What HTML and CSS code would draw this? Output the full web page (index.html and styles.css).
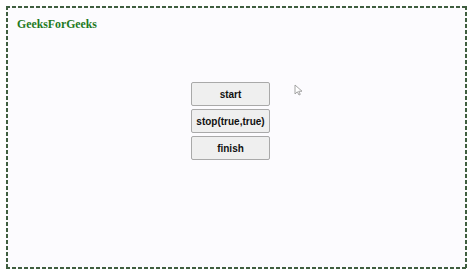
FILE: index.html
```html
<!DOCTYPE html>
<html lang="en">
<head>
  <meta charset="UTF-8" />
  <title>GeeksForGeeks</title>
  <link rel="stylesheet" href="styles.css">
</head>
<body>
  <div class="box">
    <h1 class="title">GeeksForGeeks</h1>

    <div class="controls">
      <button class="button">start</button>
      <button class="button">stop(true,true)</button>
      <button class="button">finish</button>
    </div>

    <!-- mouse pointer left in the capture -->
    <svg class="cursor" width="9" height="12" viewBox="0 0 9 12">
      <path d="M1 1 L1 10 L3.3 7.8 L5 11 L6.3 10.4 L4.7 7.3 L8 7.2 Z" fill="#fff" stroke="#9a9a9a" stroke-width="0.9" stroke-linejoin="round" />
    </svg>
  </div>
</body>
</html>
```

FILE: styles.css
```css
body {
  margin: 0;
  background-color: white;
  font-family: "Liberation Serif", serif;
}

/* dashed frame drawn with gradients to get the short dashes */
.box {
  position: relative;
  box-sizing: border-box;
  height: 263px;
  margin: 6px 7px 0 6px;
  padding: 11px 10px 10px 11px;
  background:
    repeating-linear-gradient(90deg, #3f5e3f 0 4px, transparent 4px 6px) left top / 100% 2px no-repeat,
    repeating-linear-gradient(90deg, #3f5e3f 0 4px, transparent 4px 6px) left bottom / 100% 2px no-repeat,
    repeating-linear-gradient(180deg, #3f5e3f 0 4px, transparent 4px 6px) left top / 2px 100% no-repeat,
    repeating-linear-gradient(180deg, #3f5e3f 0 4px, transparent 4px 6px) right top / 2px 100% no-repeat,
    #fcfbfe;
}

.title {
  margin: 0;
  font-size: 11.8px;
  line-height: 14px;
  font-weight: bold;
  color: #1f7a1f;
}

.controls {
  display: flex;
  flex-direction: column;
  align-items: flex-start;
  gap: 3px;
  margin-top: 51px;
  margin-left: 174px;
}

/* Button Styling */
.button {
  width: 79px;
  height: 24px;
  padding: 0;
  font-family: "Liberation Sans", Arial, sans-serif;
  font-size: 10px;
  font-weight: bold;
  color: #111;
  background-color: #efefef;
  border: 1px solid #a9a9a9;
  border-radius: 2px;
}

.cursor {
  position: absolute;
  left: 288px;
  top: 78px;
}
```
